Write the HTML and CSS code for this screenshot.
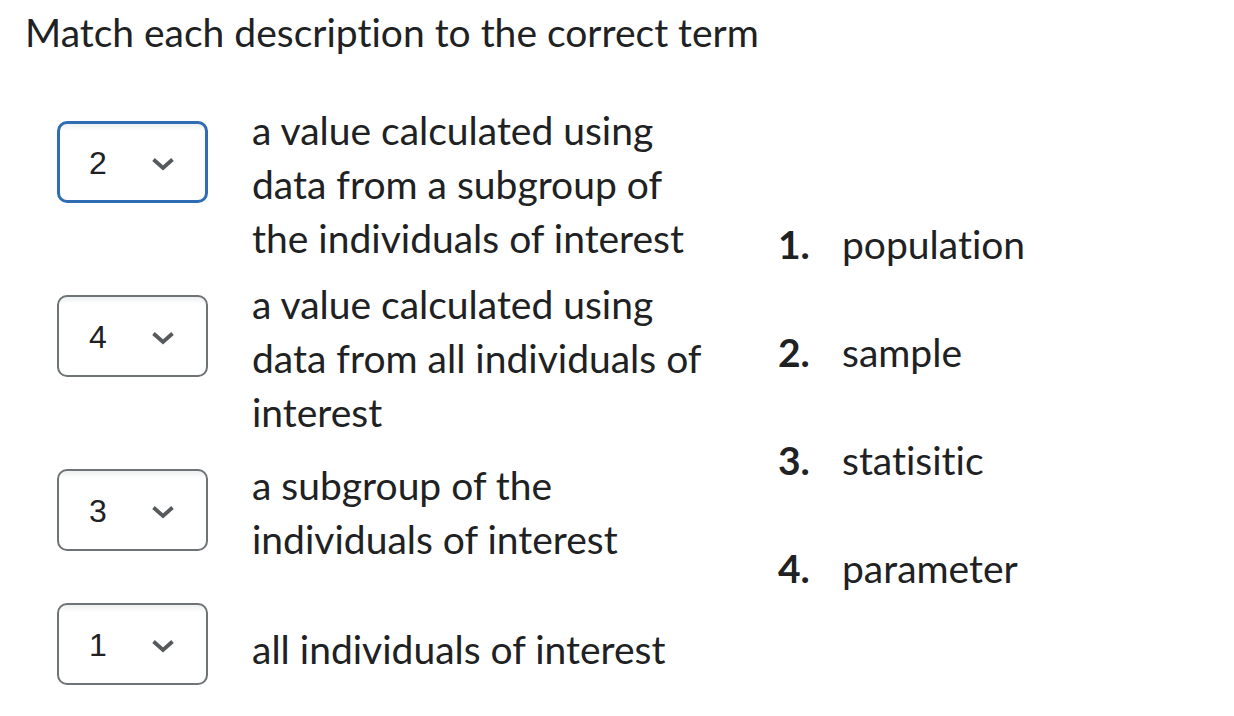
FILE: index.html
```html
<!DOCTYPE html>
<html lang="en">
<head>
<meta charset="utf-8">
<title>Matching question</title>
<link rel="stylesheet" href="styles.css">
</head>
<body>
<h1 class="title">Match each description to the correct term</h1>
<div class="quiz">
  <div class="pairs">
    <div class="pair pair-1">
      <div class="select is-focused"><span class="select-value">2</span><svg class="chev" width="24" height="14" viewBox="0 0 24 14"><path d="M2.5 2.5 L12 11 L21.5 2.5"/></svg></div>
      <div class="desc">a value calculated using data from a subgroup of the individuals of interest</div>
    </div>
    <div class="pair pair-2">
      <div class="select"><span class="select-value">4</span><svg class="chev" width="24" height="14" viewBox="0 0 24 14"><path d="M2.5 2.5 L12 11 L21.5 2.5"/></svg></div>
      <div class="desc">a value calculated using data from all individuals of interest</div>
    </div>
    <div class="pair pair-3">
      <div class="select"><span class="select-value">3</span><svg class="chev" width="24" height="14" viewBox="0 0 24 14"><path d="M2.5 2.5 L12 11 L21.5 2.5"/></svg></div>
      <div class="desc">a subgroup of the individuals of interest</div>
    </div>
    <div class="pair pair-4">
      <div class="select"><span class="select-value">1</span><svg class="chev" width="24" height="14" viewBox="0 0 24 14"><path d="M2.5 2.5 L12 11 L21.5 2.5"/></svg></div>
      <div class="desc">all individuals of interest</div>
    </div>
  </div>
  <ol class="terms">
    <li class="term"><span class="term-num">1.</span><span class="term-text">population</span></li>
    <li class="term"><span class="term-num">2.</span><span class="term-text">sample</span></li>
    <li class="term"><span class="term-num">3.</span><span class="term-text">statisitic</span></li>
    <li class="term"><span class="term-num">4.</span><span class="term-text">parameter</span></li>
  </ol>
</div>
</body>
</html>
```

FILE: styles.css
```css
html, body {
  margin: 0;
  padding: 0;
  background: #ffffff;
}

body {
  font-family: Lato, "Noto Sans", sans-serif;
  color: #202122;
  font-variant-ligatures: none;
}

.title {
  margin: 0;
  padding: 12px 0 0 25px;
  font-size: 39px;
  font-weight: 400;
  line-height: 40px;
}

.quiz {
  display: flex;
  align-items: flex-start;
  margin-top: 51px;
  padding-left: 57px;
}

.pairs {
  display: flex;
  flex-direction: column;
}

.pair {
  display: flex;
  align-items: flex-start;
  gap: 44px;
}

.pair-2 { margin-top: 12px; }
.pair-3 { margin-top: 19px; }
.pair-4 { margin-top: 38px; }

.pair-1 .select,
.pair-2 .select { margin-top: 18px; }
.pair-3 .select { margin-top: 11px; }
.pair-4 .desc { margin-top: 18px; }
.pair-4 .select { margin-top: -1px; }

.select {
  box-sizing: border-box;
  width: 151px;
  height: 82px;
  flex: none;
  display: flex;
  align-items: center;
  justify-content: space-between;
  padding: 0 31px 0 30px;
  border: 2px solid #6e7376;
  border-radius: 10px;
  background: linear-gradient(to bottom, #eef0f1 0, #f7f8f8 4px, #ffffff 7px);
}

.select.is-focused {
  border: 3px solid #2e6db4;
  padding: 0 30px 0 29px;
}

.select-value {
  font-family: "Liberation Sans", Arial, sans-serif;
  font-size: 32px;
  line-height: 1;
  color: #202122;
  margin-top: 2px;
}

.chev {
  display: block;
  margin-top: 3px;
}

.chev path {
  fill: none;
  stroke: #565a5c;
  stroke-width: 3.8;
  stroke-linejoin: miter;
}

.desc {
  width: 455px;
  font-size: 39px;
  line-height: 54px;
}

.terms {
  list-style: none;
  margin: 114px 0 0 71px;
  padding: 0;
  display: flex;
  flex-direction: column;
  gap: 54px;
}

.term {
  display: flex;
  font-size: 39px;
  line-height: 54px;
}

.term-num {
  width: 64px;
  font-weight: 700;
  flex: none;
}
```
